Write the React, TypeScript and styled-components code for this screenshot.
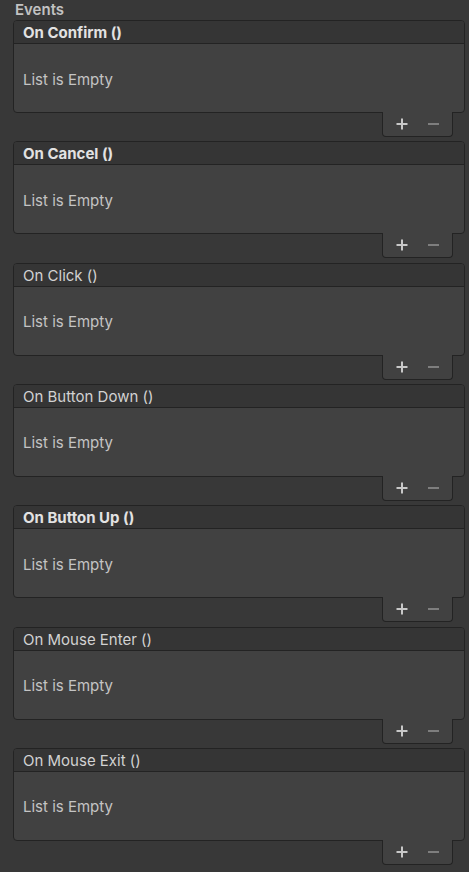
import React, {FC} from 'react';
import styled, {createGlobalStyle} from "styled-components";

const GlobalStyle = createGlobalStyle`
  html, body {
    margin: 0;
    padding: 0;
    background-color: #383838;
  }
  body {
    font-family: Inter, "Noto Sans", sans-serif;
    -webkit-font-smoothing: antialiased;
  }
`;

const Inspector = styled.div`
  display: flex;
  flex-direction: column;
  padding: 0 4px 0 13px;
  width: 469px;
  box-sizing: border-box;
`;

const SectionTitle = styled.div`
  height: 20px;
  line-height: 20px;
  padding-left: 2px;
  font-size: 15px;
  font-weight: 600;
  color: #c2c2c2;
`;

const EventBlock = styled.div`
  display: flex;
  flex-direction: column;
  margin-bottom: 4.33px;
`;

const Panel = styled.div`
  display: flex;
  flex-direction: column;
  height: 93px;
  box-sizing: border-box;
  border: 1px solid #232323;
  border-radius: 4px;
  overflow: hidden;
  background-color: #414141;
`;

const PanelHeader = styled.div<{ $bold?: boolean }>`
  height: 23px;
  flex: none;
  box-sizing: border-box;
  display: flex;
  align-items: center;
  padding: 1px 0 0 9px;
  background-color: #353535;
  border-bottom: 1px solid #232323;
  font-size: 15px;
  font-weight: ${p => (p.$bold ? 700 : 400)};
  color: ${p => (p.$bold ? '#e2e2e2' : '#d2d2d2')};
`;

const PanelBody = styled.div`
  flex: 1;
  display: flex;
  align-items: center;
  padding: 2px 0 0 9px;
  font-size: 15px;
  color: #c4c4c4;
`;

const Footer = styled.div`
  position: relative;
  align-self: flex-end;
  margin: -1px 12px 0 0;
  width: 71px;
  height: 25px;
  box-sizing: border-box;
  display: flex;
  align-items: center;
  padding: 0 4px 0 5px;
  gap: 3px;
  background-color: #414141;
  border: 1px solid #232323;
  border-top: none;
  border-radius: 0 0 4px 4px;
`;

const FooterButton = styled.button`
  width: 28px;
  height: 20px;
  padding: 0;
  border: none;
  background: transparent;
  display: flex;
  align-items: center;
  justify-content: center;
  cursor: pointer;
`;

const PlusIcon: FC = () => (
    <svg width="12" height="12" viewBox="0 0 12 12">
        <path d="M6 0.5V11.5M0.5 6H11.5" stroke="#c8c8c8" strokeWidth="2"/>
    </svg>
);

const MinusIcon: FC = () => (
    <svg width="11" height="12" viewBox="0 0 11 12">
        <path d="M0 6H11" stroke="#7e7e7e" strokeWidth="2"/>
    </svg>
);

interface EventItem {
    name: string;
    bold: boolean;
}

const events: EventItem[] = [
    {name: 'On Confirm ()', bold: true},
    {name: 'On Cancel ()', bold: true},
    {name: 'On Click ()', bold: false},
    {name: 'On Button Down ()', bold: false},
    {name: 'On Button Up ()', bold: true},
    {name: 'On Mouse Enter ()', bold: false},
    {name: 'On Mouse Exit ()', bold: false},
];

const App: FC = () => {
    return (
        <>
            <GlobalStyle/>
            <Inspector>
                <SectionTitle>Events</SectionTitle>
                {events.map(el => (
                    <EventBlock key={el.name}>
                        <Panel>
                            <PanelHeader $bold={el.bold}>{el.name}</PanelHeader>
                            <PanelBody>List is Empty</PanelBody>
                        </Panel>
                        <Footer>
                            <FooterButton><PlusIcon/></FooterButton>
                            <FooterButton><MinusIcon/></FooterButton>
                        </Footer>
                    </EventBlock>
                ))}
            </Inspector>
        </>
    );
};

export default App;
